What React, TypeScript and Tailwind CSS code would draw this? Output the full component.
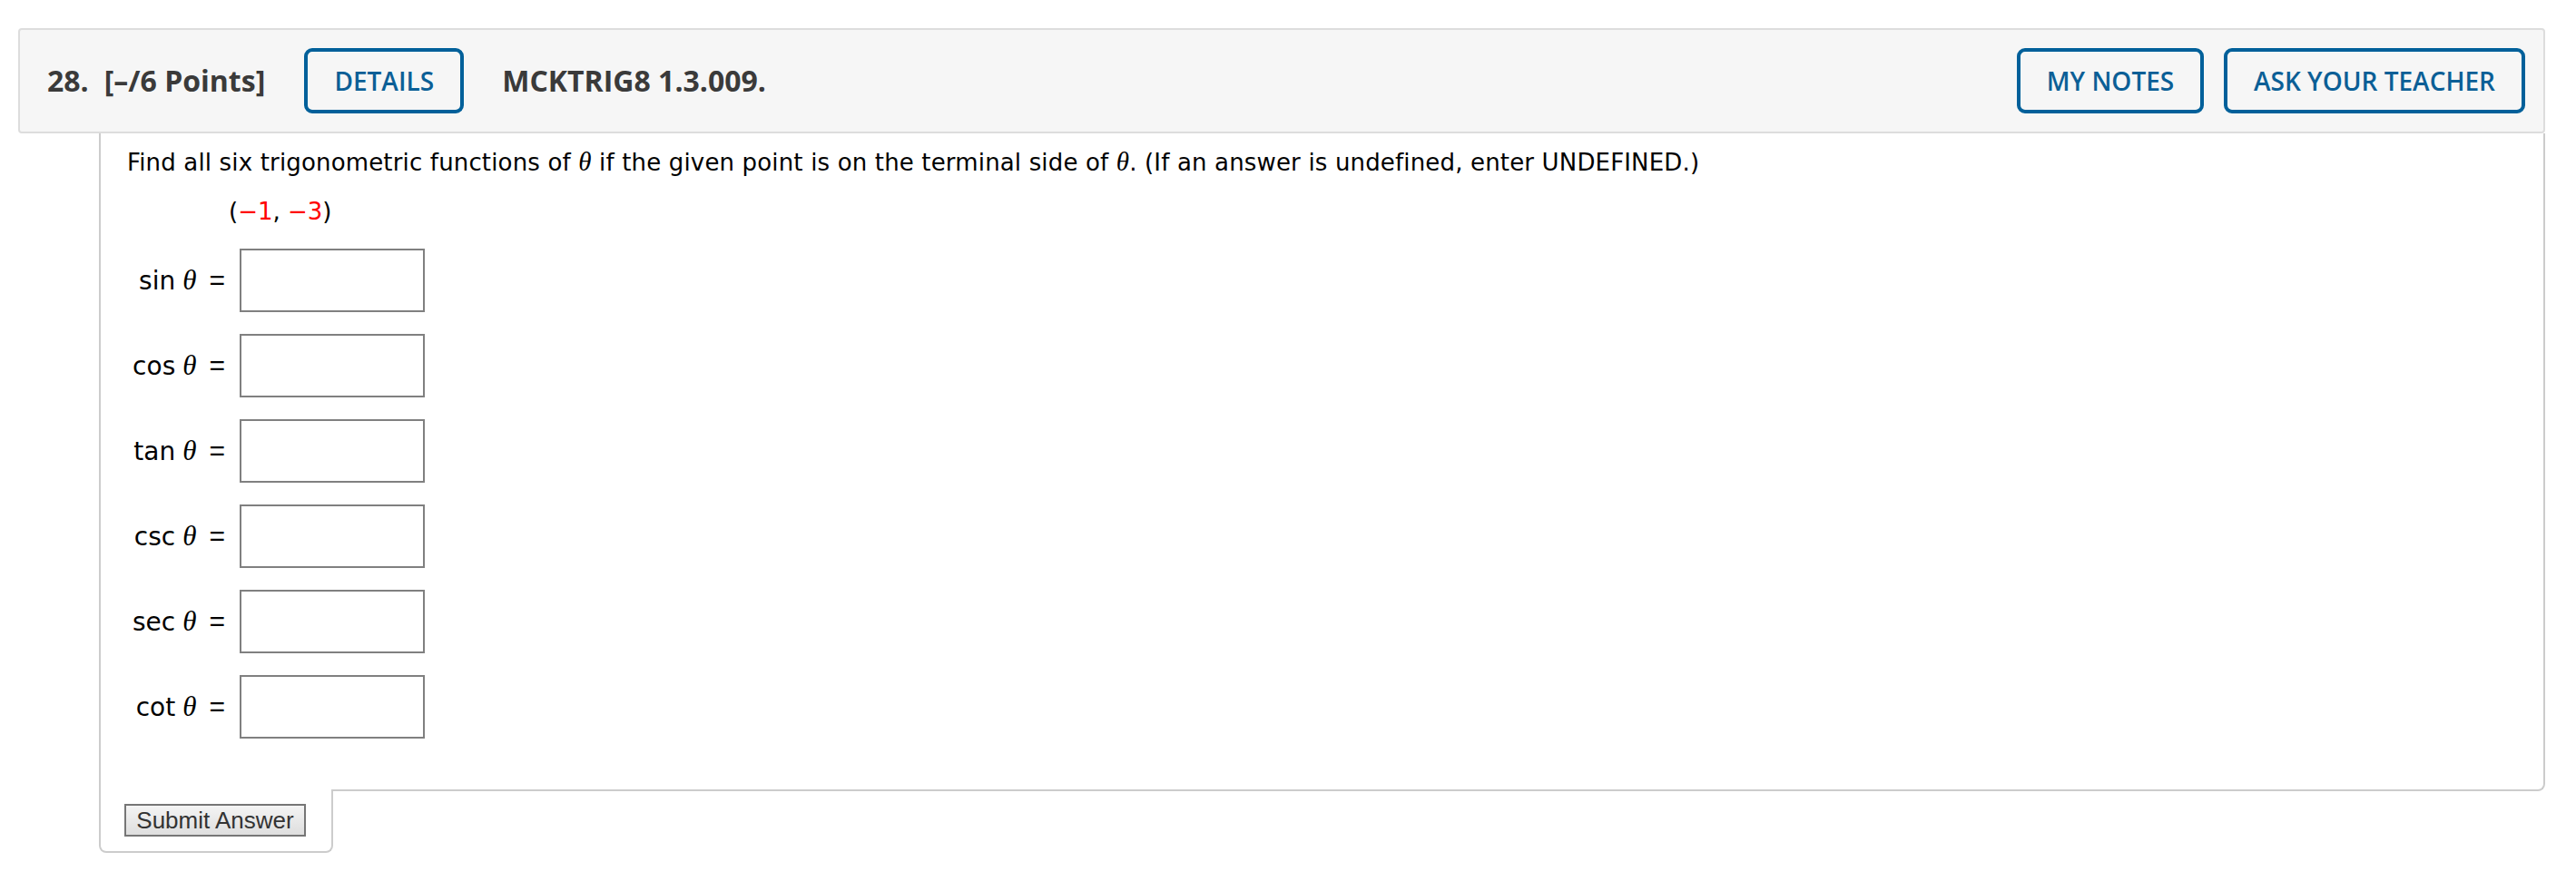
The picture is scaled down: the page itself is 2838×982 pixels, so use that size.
import React from "react";

function HeaderButton({ label, w }: { label: string; w: string }) {
  return (
    <button
      className={`${w} h-[72px] rounded-[9px] border-[4px] border-[#00609a] bg-[#f6f6f6] text-[#0b5f96] text-[28px] font-semibold font-['Open_Sans',sans-serif] flex items-center justify-center`}
    >
      {label}
    </button>
  );
}

function Row({ name }: { name: string }) {
  return (
    <div className="flex items-center h-[70px]">
      <div className="w-[108px] flex justify-end items-baseline text-[28px] text-black font-['DejaVu_Sans',Verdana,sans-serif]">
        <span>{name}</span>
        <span className="ml-[8px] italic text-[31px] font-['Liberation_Serif',serif]">θ</span>
        <span className="ml-[14px] text-[30px] font-['Liberation_Sans',Arial,sans-serif]">=</span>
      </div>
      <div className="ml-[16px] w-[204px] h-[70px] border-2 border-[#808080] bg-white" />
    </div>
  );
}

export default function App() {
  return (
    <div className="w-[2838px] h-[982px] bg-white pt-[31px] pl-[20px] pr-[34px]">
      <div className="h-[116px] border-2 border-[#dddddd] bg-[#f6f6f6] rounded-[4px] flex items-center pl-[30px] pr-[20px] font-['Open_Sans',sans-serif]">
        <span className="text-[32px] font-bold text-[#3a3a3a]">28.</span>
        <span className="ml-[17px] text-[32px] font-bold text-[#3a3a3a]">[–/6 Points]</span>
        <div className="ml-[43px]">
          <HeaderButton label="DETAILS" w="w-[176px]" />
        </div>
        <span className="ml-[42px] text-[32px] font-bold text-[#3a3a3a]">MCKTRIG8 1.3.009.</span>
        <div className="ml-auto flex gap-[22px]">
          <HeaderButton label="MY NOTES" w="w-[206px]" />
          <HeaderButton label="ASK YOUR TEACHER" w="w-[332px]" />
        </div>
      </div>
      <div className="ml-[89px]">
        <div className="border-l-2 border-r-2 border-b-2 border-[#cccccc] rounded-br-[8px] pt-[12px] pl-[29px] pb-[56px] text-black font-['DejaVu_Sans',Verdana,sans-serif]">
          <div className="text-[26px] leading-[38px] tracking-[0.16px]">
            Find all six trigonometric functions of{" "}
            <span className="italic text-[29px] font-['Liberation_Serif',serif]">θ</span> if the given point is on the
            terminal side of <span className="italic text-[29px] font-['Liberation_Serif',serif]">θ</span>. (If an
            answer is undefined, enter UNDEFINED.)
          </div>
          <div className="mt-[16px] ml-[112px] text-[26px] leading-[38px]">
            (<span className="text-[#ff0000]">−1</span>, <span className="text-[#ff0000]">−3</span>)
          </div>
          <div className="mt-[22px] flex flex-col gap-[24px]">
            <Row name="sin" />
            <Row name="cos" />
            <Row name="tan" />
            <Row name="csc" />
            <Row name="sec" />
            <Row name="cot" />
          </div>
        </div>
        <div className="-mt-[2px] w-[258px] bg-white border-l-2 border-r-2 border-b-2 border-[#cccccc] rounded-b-[8px] pt-[16px] pb-[16px] pl-[26px]">
          <button className="w-[200px] h-[36px] border-2 border-[#767676] bg-gradient-to-b from-[#f4f4f4] to-[#dedede] text-[26px] leading-none text-[#333333] font-['Liberation_Sans',Arial,sans-serif] flex items-center justify-center">
            Submit Answer
          </button>
        </div>
      </div>
    </div>
  );
}
